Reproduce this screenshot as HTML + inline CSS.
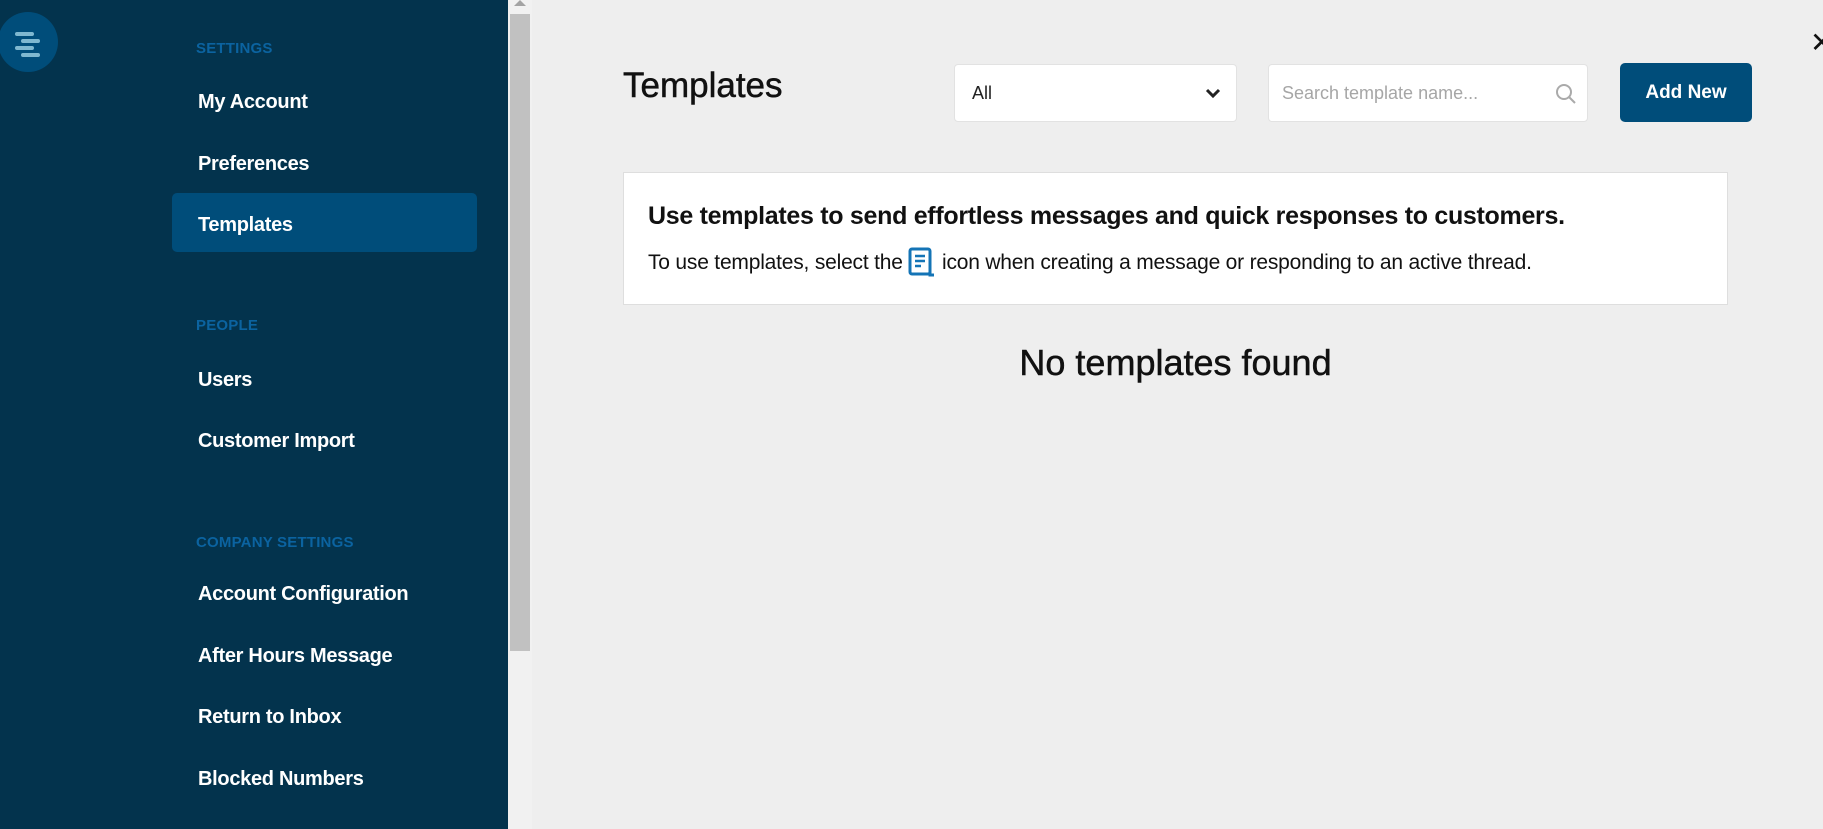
<!DOCTYPE html>
<html><head><meta charset="utf-8"><style>
*{margin:0;padding:0;box-sizing:border-box}
body{width:1823px;height:829px;overflow:hidden;background:#eeeeee;font-family:"Liberation Sans",sans-serif;position:relative}
#side{position:absolute;left:0;top:0;width:508px;height:829px;background:#03334d}
.logo{position:absolute;left:-2px;top:12px;width:60px;height:60px;border-radius:50%;background:#004d7a}
.logo i{position:absolute;height:4px;border-radius:2px;background:#7fb8d0}
.h{position:absolute;left:196px;color:#0b63a0;font-weight:bold;font-size:15px;letter-spacing:0.2px}
.it{position:absolute;left:198px;color:#fff;font-weight:bold;font-size:20px;letter-spacing:-0.3px}
.sel{position:absolute;left:172px;top:193px;width:305px;height:59px;background:#004d7a;border-radius:5px}
#track{position:absolute;left:508px;top:0;width:24px;height:829px;background:#f1f1f1}
#thumb{position:absolute;left:510px;top:14px;width:20px;height:637px;background:#c1c1c1}
.box{position:absolute;background:#fff;border-radius:4px}
</style></head><body>
<div id="side">
<div class="logo"><i style="left:17px;top:20px;width:19px"></i><i style="left:23px;top:27px;width:19px"></i><i style="left:17px;top:34px;width:19px"></i><i style="left:23px;top:41px;width:19px"></i></div>
<div class="sel"></div>
<div class="h" style="top:40px">SETTINGS</div>
<div class="it" style="top:91px">My Account</div>
<div class="it" style="top:153px">Preferences</div>
<div class="it" style="top:214px">Templates</div>
<div class="h" style="top:317px">PEOPLE</div>
<div class="it" style="top:369px">Users</div>
<div class="it" style="top:430px">Customer Import</div>
<div class="h" style="top:534px">COMPANY SETTINGS</div>
<div class="it" style="top:583px">Account Configuration</div>
<div class="it" style="top:645px">After Hours Message</div>
<div class="it" style="top:706px">Return to Inbox</div>
<div class="it" style="top:768px">Blocked Numbers</div>
</div>
<div id="track"></div><div id="thumb"></div>
<div style="position:absolute;left:514px;top:0;width:0;height:0;border-left:6px solid transparent;border-right:6px solid transparent;border-bottom:6px solid #a3a3a3"></div>

<div style="position:absolute;left:623px;top:66px;font-size:35px;color:#111;-webkit-text-stroke:0.5px #111">Templates</div>
<div class="box" style="left:954px;top:64px;width:283px;height:58px;border:1px solid #e2e2e2">
<span style="position:absolute;left:17px;top:18px;font-size:18px;color:#222">All</span>
<svg style="position:absolute;left:250px;top:23px" width="16" height="12" viewBox="0 0 16 12"><path d="M2 2l6 6 6-6" stroke="#222" stroke-width="3" fill="none"/></svg>
</div>
<div class="box" style="left:1268px;top:64px;width:320px;height:58px;border:1px solid #e2e2e2">
<span style="position:absolute;left:13px;top:18px;font-size:18px;color:#a6a6a6">Search template name...</span>
<svg style="position:absolute;left:286px;top:18px" width="22" height="22" viewBox="0 0 22 22"><circle cx="9" cy="9" r="7" stroke="#aaa" stroke-width="2" fill="none"/><path d="M14 14l6 6" stroke="#aaa" stroke-width="2"/></svg>
</div>
<div class="box" style="left:1620px;top:63px;width:132px;height:59px;background:#004d7a;border-radius:5px;color:#fff;font-weight:bold;font-size:19px;text-align:center;line-height:59px">Add New</div>

<div style="position:absolute;left:623px;top:172px;width:1105px;height:133px;background:#fff;border:1px solid #dedede">
<div style="position:absolute;left:24px;top:29px;font-size:25px;font-weight:bold;color:#111;letter-spacing:-0.3px">Use templates to send effortless messages and quick responses to customers.</div>
<div style="position:absolute;left:24px;top:74px;font-size:21px;color:#111;letter-spacing:-0.2px">To use templates, select the <svg width="28" height="30" viewBox="0 0 28 30" style="vertical-align:-8px"><rect x="2" y="2" width="20" height="25" rx="2" stroke="#1474b6" stroke-width="3" fill="none"/><path d="M7 9h10M7 14h10M7 19h6" stroke="#1474b6" stroke-width="2.5"/><path d="M22 22v6h4" stroke="#1474b6" stroke-width="3" fill="none"/></svg> icon when creating a message or responding to an active thread.</div>
</div>
<div style="position:absolute;left:823px;width:705px;text-align:center;top:342px;font-size:36px;color:#111;-webkit-text-stroke:0.5px #111">No templates found</div>
<div style="position:absolute;left:1810px;top:26px;font-size:28px;color:#111">✕</div>
</body></html>
